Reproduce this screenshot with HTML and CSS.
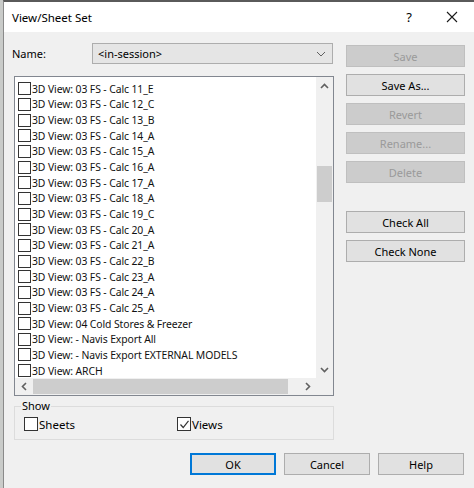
FILE: index.html
```html
<!DOCTYPE html>
<html>
<head>
<meta charset="utf-8">
<link rel="stylesheet" href="styles.css">
</head>
<body>
<div class="window">
  <div class="titlebar">
    <span class="title">View/Sheet Set</span>
    <span class="help-q">?</span>
    <span class="close-x">
      <svg width="12" height="12" viewBox="0 0 12 12"><path d="M1 1 L11 11 M11 1 L1 11" stroke="#1a1a1a" stroke-width="1.1" fill="none"/></svg>
    </span>
  </div>
  <div class="content">
    <div class="main">
      <div class="leftcol">
        <div class="name-row">
          <span class="name-label">Name:</span>
          <div class="combo">
            <span>&lt;in-session&gt;</span>
            <svg class="combo-arrow" width="10" height="6" viewBox="0 0 10 6"><path d="M1 1 L5 5 L9 1" stroke="#606060" stroke-width="1" fill="none"/></svg>
          </div>
        </div>
        <div class="listbox">
          <div class="rows">
            <div class="row"><span class="cb"></span>3D View: 03 FS - Calc 11_E</div>
            <div class="row"><span class="cb"></span>3D View: 03 FS - Calc 12_C</div>
            <div class="row"><span class="cb"></span>3D View: 03 FS - Calc 13_B</div>
            <div class="row"><span class="cb"></span>3D View: 03 FS - Calc 14_A</div>
            <div class="row"><span class="cb"></span>3D View: 03 FS - Calc 15_A</div>
            <div class="row"><span class="cb"></span>3D View: 03 FS - Calc 16_A</div>
            <div class="row"><span class="cb"></span>3D View: 03 FS - Calc 17_A</div>
            <div class="row"><span class="cb"></span>3D View: 03 FS - Calc 18_A</div>
            <div class="row"><span class="cb"></span>3D View: 03 FS - Calc 19_C</div>
            <div class="row"><span class="cb"></span>3D View: 03 FS - Calc 20_A</div>
            <div class="row"><span class="cb"></span>3D View: 03 FS - Calc 21_A</div>
            <div class="row"><span class="cb"></span>3D View: 03 FS - Calc 22_B</div>
            <div class="row"><span class="cb"></span>3D View: 03 FS - Calc 23_A</div>
            <div class="row"><span class="cb"></span>3D View: 03 FS - Calc 24_A</div>
            <div class="row"><span class="cb"></span>3D View: 03 FS - Calc 25_A</div>
            <div class="row"><span class="cb"></span>3D View: 04 Cold Stores &amp; Freezer</div>
            <div class="row"><span class="cb"></span>3D View: - Navis Export All</div>
            <div class="row"><span class="cb"></span>3D View: - Navis Export EXTERNAL MODELS</div>
            <div class="row"><span class="cb"></span>3D View: ARCH</div>
          </div>
          <div class="vscroll">
            <div class="arrow"><svg width="9" height="6" viewBox="0 0 9 6"><path d="M1 5 L4.5 1.5 L8 5" stroke="#606060" stroke-width="1.6" fill="none"/></svg></div>
            <div class="vtrack"><div class="vthumb"></div></div>
            <div class="arrow"><svg width="9" height="6" viewBox="0 0 9 6"><path d="M1 1 L4.5 4.5 L8 1" stroke="#606060" stroke-width="1.6" fill="none"/></svg></div>
          </div>
          <div class="hscroll">
            <div class="arrow"><svg width="6" height="9" viewBox="0 0 6 9"><path d="M5 1 L1.5 4.5 L5 8" stroke="#606060" stroke-width="1.6" fill="none"/></svg></div>
            <div class="htrack"><div class="hthumb"></div></div>
            <div class="arrow"><svg width="6" height="9" viewBox="0 0 6 9"><path d="M1 1 L4.5 4.5 L1 8" stroke="#606060" stroke-width="1.6" fill="none"/></svg></div>
          </div>
          <div class="corner"></div>
        </div>
        <fieldset class="show-group">
          <legend>Show</legend>
          <label class="opt opt-sheets"><span class="cb big"></span>Sheets</label>
          <label class="opt opt-views"><span class="cb big checked"><svg width="11" height="11" viewBox="0 0 11 11"><path d="M1.5 5.5 L4.2 8.5 L9.5 1.8" stroke="#333" stroke-width="1.2" fill="none"/></svg></span>Views</label>
        </fieldset>
      </div>
      <div class="rightcol">
        <div class="btn disabled">Save</div>
        <div class="btn">Save As...</div>
        <div class="btn disabled">Revert</div>
        <div class="btn disabled">Rename...</div>
        <div class="btn disabled">Delete</div>
        <div class="btn gap">Check All</div>
        <div class="btn">Check None</div>
      </div>
    </div>
    <div class="footer">
      <div class="btn fbtn default">OK</div>
      <div class="btn fbtn">Cancel</div>
      <div class="btn fbtn">Help</div>
    </div>
  </div>
</div>
</body>
</html>
```

FILE: styles.css
```css
* { box-sizing: border-box; }
html, body {
  margin: 0;
  padding: 0;
}
body {
  width: 474px;
  height: 488px;
  overflow: hidden;
  background: #c9cbc9;
  font-family: "Noto Sans", "Open Sans", sans-serif;
  color: #000;
}
.window {
  margin-left: 3px;
  width: 471px;
  height: 488px;
  border-top: 2px solid #5a5a5a;
  border-left: 1px solid #8a8a8a;
  background: #f0f0f0;
  display: flex;
  flex-direction: column;
}
.titlebar {
  height: 30px;
  background: #fff;
  display: flex;
  align-items: center;
  padding-left: 8px;
  font-size: 11.5px;
  color: #000;
}
.title { flex: 1; }
.help-q {
  width: 14px;
  margin-right: 30px;
  font-size: 13px;
  text-align: center;
}
.close-x {
  width: 12px;
  height: 12px;
  margin-right: 16px;
  display: flex;
}
.content {
  flex: 1;
  display: flex;
  flex-direction: column;
  padding: 11px 0 0 8px;
}
.main {
  display: flex;
}
.leftcol {
  width: 326px;
  display: flex;
  flex-direction: column;
}
.name-row {
  display: flex;
  align-items: center;
  height: 21px;
  font-size: 11px;
}
.name-label { width: 80px; }
.combo {
  width: 241px;
  height: 21px;
  border: 1px solid #adadad;
  background: #e5e5e5;
  display: flex;
  align-items: center;
  padding-left: 5px;
  padding-right: 6px;
  font-size: 11px;
}
.combo span { flex: 1; }
.listbox {
  margin-top: 12px;
  margin-left: 2px;
  width: 320px;
  height: 320px;
  border: 1px solid #828790;
  background: #fff;
  display: grid;
  grid-template-columns: 1fr 17px;
  grid-template-rows: 1fr 17px;
}
.rows {
  overflow: hidden;
  padding: 4px 0 0 3px;
  font-size: 10.4px;
  letter-spacing: -0.1px;
}
.row {
  height: 15.67px;
  display: flex;
  align-items: center;
  white-space: nowrap;
  color: #111;
}
.cb {
  width: 13px;
  height: 13px;
  border: 1px solid #333;
  background: #fff;
  margin-right: 1px;
  flex: none;
  display: flex;
  align-items: center;
  justify-content: center;
}
.vscroll {
  background: #f0f0f0;
  display: flex;
  flex-direction: column;
}
.arrow {
  width: 17px;
  height: 17px;
  display: flex;
  align-items: center;
  justify-content: center;
  flex: none;
}
.vtrack { flex: 1; padding-left: 1px; padding-right: 1px; }
.vthumb {
  margin-top: 72px;
  height: 36px;
  background: #cdcdcd;
}
.hscroll {
  background: #f0f0f0;
  display: flex;
}
.htrack { flex: 1; padding-top: 1px; padding-bottom: 1px; }
.hthumb {
  margin-left: 1px;
  width: 255px;
  height: 100%;
  background: #cdcdcd;
}
.corner { background: #f0f0f0; }
.show-group {
  margin: 4px 0 0 2px;
  width: 320px;
  height: 40px;
  border: 1px solid #dcdcdc;
  padding: 0;
  position: relative;
  display: flex;
  font-size: 11px;
}
.show-group legend {
  padding: 0 1px;
  margin-left: 6px;
  font-size: 11px;
  line-height: 12px;
  color: #000;
}
.opt {
  display: flex;
  align-items: center;
  height: 16px;
  margin-top: 4px;
  font-size: 11.5px;
}
.opt .cb { width: 14px; height: 14px; border-color: #333; }
.opt-sheets { margin-left: 9px; width: 153px; }
.rightcol {
  margin-left: 8px;
  width: 119px;
  padding-top: 2px;
  display: flex;
  flex-direction: column;
  gap: 7px;
}
.btn {
  height: 22px;
  border: 1px solid #adadad;
  background: #e1e1e1;
  display: flex;
  align-items: center;
  justify-content: center;
  font-size: 11px;
  color: #000;
}
.btn.disabled {
  background: #cccccc;
  border-color: #bfbfbf;
  color: #9a9a9a;
}
.btn.gap { margin-top: 21px; }
.footer {
  margin-top: 13px;
  display: flex;
  padding-left: 178px;
  gap: 8px;
}
.fbtn { width: 86px; height: 22px; }
.fbtn.default {
  border: 2px solid #0078d7;
}
```
